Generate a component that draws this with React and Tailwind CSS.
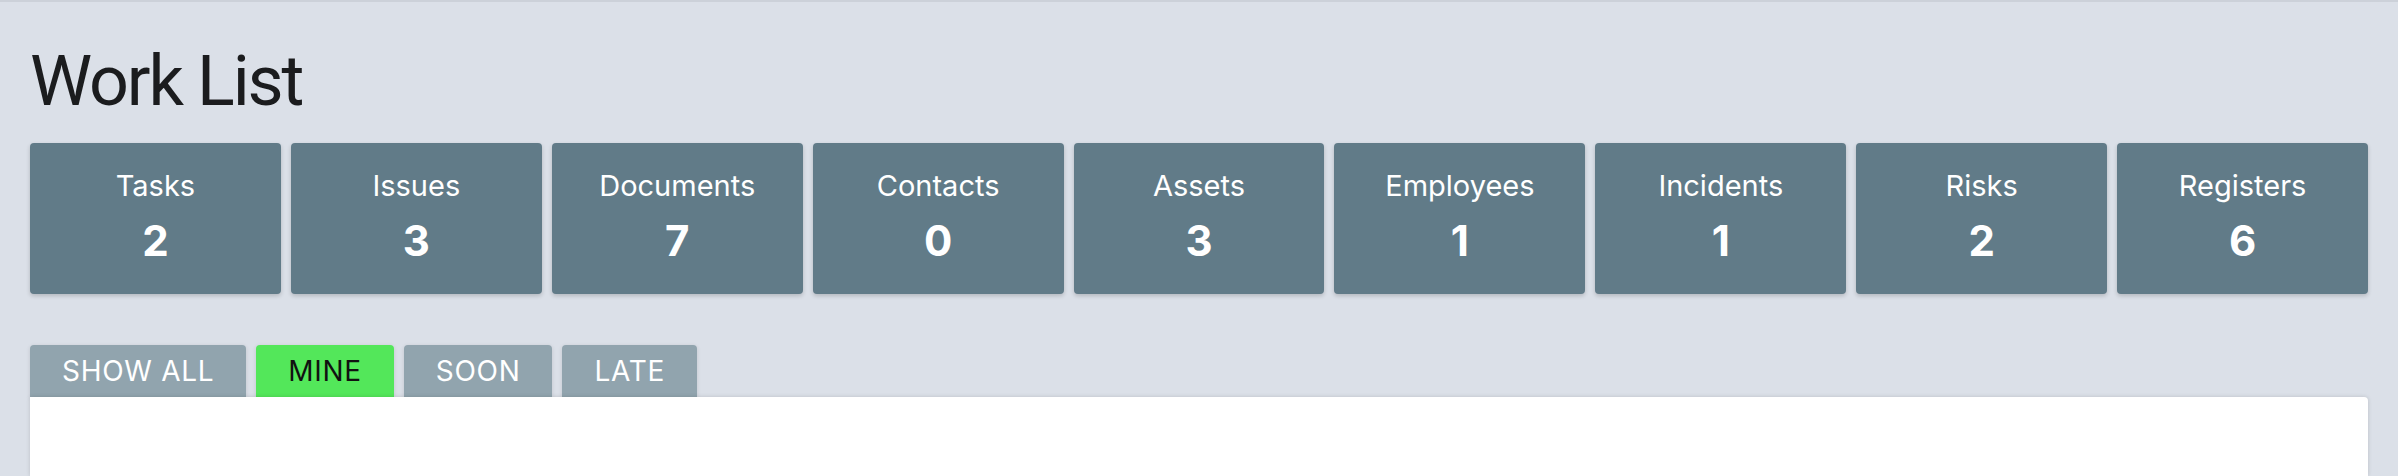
import React from "react";

const counts = [
    { label: "Tasks", value: 2 },
    { label: "Issues", value: 3 },
    { label: "Documents", value: 7 },
    { label: "Contacts", value: 0 },
    { label: "Assets", value: 3 },
    { label: "Employees", value: 1 },
    { label: "Incidents", value: 1 },
    { label: "Risks", value: 2 },
    { label: "Registers", value: 6 },
];

const filters = ["Show all", "Mine", "Soon", "Late"];

export default function App() {
    const active = "Mine";

    return (
        <div
            className="h-[476px] bg-[#dbe0e8] border-t-2 border-[#ccd1d9] px-[30px] pt-[44px] overflow-hidden flex flex-col"
            style={{ fontFamily: "Inter, 'Noto Sans', sans-serif" }}
        >
            <h1
                className="text-[70px] leading-none text-[#1b1c1e] font-normal tracking-[-0.03em]"
                style={{ fontFamily: "Roboto, 'Noto Sans', sans-serif" }}
            >
                Work List
            </h1>

            <div className="mt-[27px] flex gap-[10px]">
                {counts.map((c) => (
                    <div
                        key={c.label}
                        className="flex-1 h-[151px] rounded-[4px] bg-[#617b88] shadow-[0_2px_4px_rgba(0,0,0,0.18)] flex flex-col items-center pt-[28px] text-white"
                    >
                        <div className="text-[29px] leading-none">{c.label}</div>
                        <div className="mt-[20px] text-[42px] leading-none font-bold">{c.value}</div>
                    </div>
                ))}
            </div>

            <div className="mt-[51px] flex gap-[10px]">
                {filters.map((f) => (
                    <button
                        key={f}
                        className={`h-[52px] px-[32px] rounded-t-[4px] uppercase text-[28px] leading-[52px] tracking-[0.025em] shadow-[0_1px_4px_rgba(0,0,0,0.12)] ${
                            f === active ? "bg-[#53e75a] text-[#111]" : "bg-[#91a4ae] text-white"
                        }`}
                    >
                        {f}
                    </button>
                ))}
            </div>

            <div className="flex-1 bg-white rounded-tr-[4px] shadow-[0_0_4px_rgba(0,0,0,0.15)]" />
        </div>
    );
}
